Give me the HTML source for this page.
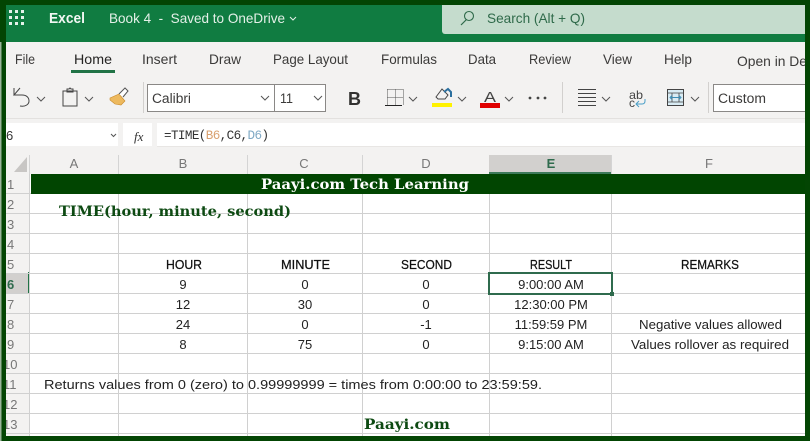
<!DOCTYPE html>
<html><head><meta charset="utf-8"><title>Excel TIME</title>
<style>
html,body{margin:0;padding:0;background:#fff;width:810px;height:441px;overflow:hidden}
svg{display:block}
text{font-family:"Liberation Sans",sans-serif;white-space:pre}
.ui{font-size:14px;fill:#3b3a39}
.cell{font-size:13px;fill:#222}
.hd{font-size:13px;fill:#111;stroke:#111;stroke-width:.25}
.rn{font-size:13px;fill:#777}
.cn{font-size:13px;fill:#777}
.bm{font-family:"DejaVu Serif",serif;font-weight:bold}
.chev{fill:none;stroke:#555;stroke-width:1}
.ic{fill:none;stroke:#444;stroke-width:1}
</style></head><body>
<svg width="810" height="441" viewBox="0 0 810 441" xmlns="http://www.w3.org/2000/svg">
<rect width="810" height="441" fill="#fff"/>
<!-- title bar -->
<rect x="0" y="0" width="810" height="42" fill="#107c41"/>
<g fill="#e6f2ea">
<rect x="9" y="10" width="3" height="3"/><rect x="15" y="10" width="3" height="3"/><rect x="21" y="10" width="3" height="3"/>
<rect x="9" y="16" width="3" height="3"/><rect x="15" y="16" width="3" height="3"/><rect x="21" y="16" width="3" height="3"/>
<rect x="9" y="22" width="3" height="3"/><rect x="15" y="22" width="3" height="3"/><rect x="21" y="22" width="3" height="3"/>
</g>
<text x="49" y="23" font-size="15" font-weight="bold" fill="#f2f8f4" textLength="36" lengthAdjust="spacingAndGlyphs">Excel</text>
<text x="109" y="23" font-size="14" fill="#e4f0e8" textLength="176" lengthAdjust="spacingAndGlyphs">Book 4  -  Saved to OneDrive</text>
<path d="M290 17l3 3 3-3" fill="none" stroke="#e4f0e8" stroke-width="1"/>
<path d="M442 5H810V34H445a3 3 0 0 1-3-3Z" fill="#c5dccd"/>
<circle cx="469" cy="16" r="4.5" fill="none" stroke="#2f6a4a" stroke-width="1.1"/>
<path d="M466 20l-5 5" stroke="#2f6a4a" stroke-width="1.2"/>
<text x="487" y="23" font-size="14" fill="#2f6a4a" textLength="98" lengthAdjust="spacingAndGlyphs">Search (Alt + Q)</text>
<!-- ribbon -->
<rect x="0" y="42" width="810" height="76" fill="#f3f2f1"/>
<g class="ui">
<text x="15" y="64" textLength="20" lengthAdjust="spacingAndGlyphs">File</text>
<text x="74" y="64" textLength="38" lengthAdjust="spacingAndGlyphs" fill="#252423">Home</text>
<text x="142" y="64" textLength="35" lengthAdjust="spacingAndGlyphs">Insert</text>
<text x="209" y="64" textLength="32" lengthAdjust="spacingAndGlyphs">Draw</text>
<text x="273" y="64" textLength="75" lengthAdjust="spacingAndGlyphs">Page Layout</text>
<text x="381" y="64" textLength="56" lengthAdjust="spacingAndGlyphs">Formulas</text>
<text x="468" y="64" textLength="28" lengthAdjust="spacingAndGlyphs">Data</text>
<text x="529" y="64" textLength="42" lengthAdjust="spacingAndGlyphs">Review</text>
<text x="603" y="64" textLength="29" lengthAdjust="spacingAndGlyphs">View</text>
<text x="664" y="64" textLength="28" lengthAdjust="spacingAndGlyphs">Help</text>
<text x="737" y="66" textLength="70" lengthAdjust="spacingAndGlyphs">Open in De</text>
</g>
<rect x="71" y="70" width="44" height="3" fill="#217346"/>
<!-- toolbar icons -->
<path d="M20 88l-6 7h8c5 0 7 3 7 6 0 3-3 6-9 5M14 95v-7" class="ic" transform="translate(0 0)"/>
<path d="M37 97l4 4 4-4" class="chev"/>
<path d="M63 91h14v15H63ZM67 92v-3h2l1-1 1 1h2v3h-6Z" class="ic"/>
<path d="M85 97l4 4 4-4" class="chev"/>
<path d="M110 98l9-4 6 7-4 4-6-1-5-4Z" fill="#edb95e" stroke="#c98a2a" stroke-width=".6"/>
<path d="M119 94l6-6 3 3-5 6" fill="#fff" stroke="#555" stroke-width="1"/>
<rect x="143" y="82" width="1" height="31" fill="#d2d0ce"/>
<rect x="147.500" y="84.500" width="178" height="27" fill="#fff" stroke="#8a8886"/>
<rect x="274" y="85" width="1" height="26" fill="#8a8886"/>
<text x="152" y="103" font-size="13.500" fill="#3b3a39" textLength="39" lengthAdjust="spacingAndGlyphs">Calibri</text>
<path d="M261 96l4 4 4-4" class="chev"/>
<text x="280" y="103" font-size="13.500" fill="#3b3a39" textLength="13" lengthAdjust="spacingAndGlyphs">11</text>
<path d="M314 96l4 4 4-4" class="chev"/>
<text x="348" y="105" font-size="18" font-weight="bold" fill="#323130">B</text>
<path d="M387.500 89.500h16M387.500 97.500h16M387.500 89.500v16M395.500 89.500v16M403.500 89.500v16" fill="none" stroke="#555" stroke-width="1" stroke-dasharray="1 1"/>
<rect x="385" y="105" width="17" height="1" fill="#222"/>
<path d="M409 97l4 4 4-4" class="chev"/>
<path d="M436 97l6-8 6 6-3 4h-7Z" class="ic"/>
<path d="M444 92l4-3 3 3v5" fill="none" stroke="#2b6f9e" stroke-width="2"/>
<rect x="432" y="103" width="20" height="4" fill="#fff200"/>
<path d="M458 97l4 4 4-4" class="chev"/>
<text x="484" y="102" font-size="15" fill="#444" textLength="12" lengthAdjust="spacingAndGlyphs">A</text>
<rect x="480" y="103" width="20" height="5" fill="#e00000"/>
<path d="M505 97l4 4 4-4" class="chev"/>
<g fill="#444"><circle cx="530" cy="98" r="1.400"/><circle cx="538" cy="98" r="1.400"/><circle cx="545" cy="98" r="1.400"/></g>
<rect x="562" y="82" width="1" height="31" fill="#d2d0ce"/>
<path d="M578 89.500h18M578 93.500h18M578 97.500h18M578 101.500h18M578 105.500h18" stroke="#444" stroke-width="1"/>
<path d="M602 97l4 4 4-4" class="chev"/>
<text x="629" y="99" font-size="12" fill="#444" textLength="14" lengthAdjust="spacingAndGlyphs">ab</text>
<text x="629" y="107" font-size="12" fill="#444">c</text>
<path d="M645 99v2c0 2-1 3-3 3h-6m3-3l-3 3 3 3" fill="none" stroke="#4a9fc7" stroke-width="1"/>
<rect x="667.500" y="89.500" width="16" height="16" fill="#d9ecf4" stroke="#444"/>
<path d="M667 93h17M667 102h17M672 93v9M679 93v9" stroke="#444" stroke-width=".8" fill="none"/>
<path d="M671 97.500h9m-8-2l-2 2 2 2m7-4l2 2-2 2" fill="none" stroke="#3d8db5" stroke-width=".9"/>
<path d="M691 97l4 4 4-4" class="chev"/>
<rect x="708" y="82" width="1" height="31" fill="#d2d0ce"/>
<rect x="713.500" y="84.500" width="100" height="27" fill="#fff" stroke="#8a8886"/>
<text x="718" y="103" font-size="13.500" fill="#3b3a39" textLength="48" lengthAdjust="spacingAndGlyphs">Custom</text>
<!-- formula bar -->
<rect x="0" y="118" width="810" height="37" fill="#f3f2f1"/>
<rect x="0" y="118" width="810" height="1" fill="#e3e1df"/>
<rect x="0" y="123" width="118" height="23" fill="#fff"/>
<text x="6" y="140" font-size="13" fill="#333">6</text>
<path d="M111 134l2.500 2.500 2.500-2.500" class="chev"/>
<rect x="123" y="123" width="29" height="23" fill="#fff"/>
<text x="134" y="141" font-size="13" font-family="Liberation Serif,serif" font-style="italic" fill="#333" style="font-family:'Liberation Serif',serif">fx</text>
<rect x="157" y="123" width="653" height="23" fill="#fff"/>
<rect x="157" y="146" width="653" height="1" fill="#e8e6e4"/>
<text x="164" y="139" font-size="12.600" style="font-family:'Liberation Mono',monospace" fill="#333" textLength="105">=TIME(<tspan fill="#d9a06f">B6</tspan>,C6,<tspan fill="#7ea8c4">D6</tspan>)</text>
<!-- headers -->
<rect x="0" y="155" width="810" height="19" fill="#f3f2f1"/>
<rect x="0" y="174" width="30" height="267" fill="#f3f2f1"/>
<path d="M27 157v15H14Z" fill="#c8c6c4"/>
<rect x="489" y="155" width="123" height="18" fill="#d2d0ce"/>
<rect x="489" y="172" width="123" height="2" fill="#3d7a5a"/>
<rect x="6" y="273" width="23" height="20" fill="#d2d0ce"/>
<rect x="28" y="272" width="2" height="22" fill="#217346"/>
<g stroke="#d4d4d4" stroke-width="1">
<path d="M118.500 155v19M247.500 155v19M362.500 155v19M611.500 155v19M29.500 155v19"/>
</g>
<g class="cn" text-anchor="middle">
<text x="74" y="168">A</text><text x="183" y="168">B</text><text x="304" y="168">C</text><text x="426" y="168">D</text><text x="709" y="168">F</text>
</g>
<text x="551" y="168" font-size="13" font-weight="bold" fill="#2f6b4d" text-anchor="middle">E</text>
<!-- grid -->
<g stroke="#d0d0d0" stroke-width="1">
<path d="M29.500 174V436M118.500 174V436M247.500 174V436M362.500 174V436M489.500 174V436M611.500 174V436"/>
<path d="M0 193.500H810M0 213.500H810M0 233.500H810M0 253.500H810M0 273.500H810M0 293.500H810M0 313.500H810M0 333.500H810M0 353.500H810M0 373.500H810M0 393.500H810M0 413.500H810M0 433.500H810"/>
</g>
<g class="rn">
<text x="7" y="189">1</text><text x="7" y="209">2</text><text x="7" y="229">3</text><text x="7" y="249">4</text><text x="7" y="269">5</text>
<text x="7" y="289" font-weight="bold" fill="#2f6b4d">6</text>
<text x="7" y="309">7</text><text x="7" y="329">8</text><text x="7" y="349">9</text>
<text x="3" y="369">10</text><text x="3" y="389">11</text><text x="3" y="409">12</text><text x="3" y="429">13</text>
</g>
<!-- banner -->
<rect x="31" y="174" width="779" height="20" fill="#014501"/>
<text class="bm" x="261" y="189" font-size="14" fill="#fff" textLength="208" lengthAdjust="spacingAndGlyphs">Paayi.com Tech Learning</text>
<text class="bm" x="59" y="216" font-size="14" fill="#0d4a12" textLength="232" lengthAdjust="spacingAndGlyphs">TIME(hour, minute, second)</text>
<!-- table -->
<g class="hd">
<text x="166" y="269" textLength="36" lengthAdjust="spacingAndGlyphs">HOUR</text>
<text x="281" y="269" textLength="49" lengthAdjust="spacingAndGlyphs">MINUTE</text>
<text x="401" y="269" textLength="51" lengthAdjust="spacingAndGlyphs">SECOND</text>
<text x="530" y="269" textLength="42" lengthAdjust="spacingAndGlyphs">RESULT</text>
<text x="681" y="269" textLength="58" lengthAdjust="spacingAndGlyphs">REMARKS</text>
</g>
<g class="cell" text-anchor="middle">
<text x="183" y="289">9</text><text x="305" y="289">0</text><text x="426" y="289">0</text><text x="551" y="289">9:00:00 AM</text>
<text x="183" y="309">12</text><text x="305" y="309">30</text><text x="426" y="309">0</text><text x="551" y="309">12:30:00 PM</text>
<text x="183" y="329">24</text><text x="305" y="329">0</text><text x="426" y="329">-1</text><text x="551" y="329">11:59:59 PM</text>
<text x="183" y="349">8</text><text x="305" y="349">75</text><text x="426" y="349">0</text><text x="551" y="349">9:15:00 AM</text>
</g>
<text class="cell" x="639" y="329" textLength="143" lengthAdjust="spacingAndGlyphs">Negative values allowed</text>
<text class="cell" x="631" y="349" textLength="158" lengthAdjust="spacingAndGlyphs">Values rollover as required</text>
<text class="cell" x="44" y="389" textLength="498" lengthAdjust="spacingAndGlyphs">Returns values from 0 (zero) to 0.99999999 = times from 0:00:00 to 23:59:59.</text>
<text class="bm" x="364" y="429" font-size="14" fill="#0d4a12" textLength="86" lengthAdjust="spacingAndGlyphs">Paayi.com</text>
<!-- selection -->
<rect x="489" y="273" width="123" height="21" fill="none" stroke="#2f6b4d" stroke-width="2"/>
<rect x="610" y="292" width="4" height="4" fill="#2f6b4d"/>
<!-- outer frame -->
<path fill-rule="evenodd" d="M0 0H810V441H0ZM6 5V436H805V5Z" fill="#034503"/>
<rect x="0" y="42" width="1.500" height="399" fill="#fff" opacity=".6"/>
</svg>
</body></html>
